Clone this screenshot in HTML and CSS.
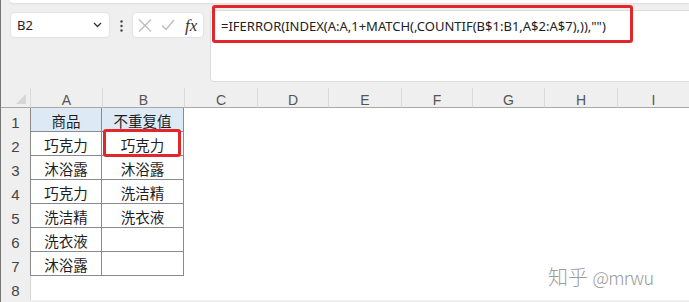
FILE: index.html
```html
<!DOCTYPE html>
<html lang="zh-CN">
<head>
  <meta charset="UTF-8" />
  <title>IFERROR 去重</title>
  <link rel="stylesheet" href="styles.css">
</head>
<body>
  <div class="app">
    <div class="ribbon-edge"></div>

    <div class="formula-row">
      <div class="namebox">
        <span>B2</span>
        <svg class="chevron" width="9" height="6" viewBox="0 0 9 6"><path d="M1 1 L4.5 4.5 L8 1" fill="none" stroke="#333" stroke-width="1.3"/></svg>
      </div>
      <div class="grip">
        <svg width="3" height="12" viewBox="0 0 3 12"><circle cx="1.5" cy="1.5" r="1.2" fill="#444"/><circle cx="1.5" cy="6" r="1.2" fill="#444"/><circle cx="1.5" cy="10.5" r="1.2" fill="#444"/></svg>
      </div>
      <div class="fx-buttons">
        <svg width="14" height="13" viewBox="0 0 14 13"><path d="M1 0.5 L13 12.5 M13 0.5 L1 12.5" stroke="#bdbdbd" stroke-width="1.4" fill="none"/></svg>
        <svg width="14" height="12" viewBox="0 0 14 12"><path d="M1 6.5 L5 10.5 L13 1" stroke="#bdbdbd" stroke-width="1.4" fill="none"/></svg>
        <span class="fx">fx</span>
      </div>
      <div class="formula">
        <span class="formula-text">=IFERROR(INDEX(A:A,1+MATCH(,COUNTIF(B$1:B1,A$2:A$7),)),"")</span>
        <span class="callout callout-formula"></span>
      </div>
    </div>

    <div class="sheet">
      <div class="corner"><span class="corner-mark"></span></div>
      <div class="col-head">A</div>
      <div class="col-head">B</div>
      <div class="col-head">C</div>
      <div class="col-head">D</div>
      <div class="col-head">E</div>
      <div class="col-head">F</div>
      <div class="col-head">G</div>
      <div class="col-head">H</div>
      <div class="col-head">I</div>

      <div class="row-head">1</div>
      <div class="cell data first title">商品</div>
      <div class="cell data title">不重复值</div>
      <div class="cell blank-span"></div>

      <div class="row-head">2</div>
      <div class="cell data first">巧克力</div>
      <div class="cell data selected">巧克力<span class="callout callout-cell"></span></div>
      <div class="cell blank-span"></div>

      <div class="row-head">3</div>
      <div class="cell data first">沐浴露</div>
      <div class="cell data">沐浴露</div>
      <div class="cell blank-span"></div>

      <div class="row-head">4</div>
      <div class="cell data first">巧克力</div>
      <div class="cell data">洗洁精</div>
      <div class="cell blank-span"></div>

      <div class="row-head">5</div>
      <div class="cell data first">洗洁精</div>
      <div class="cell data">洗衣液</div>
      <div class="cell blank-span"></div>

      <div class="row-head">6</div>
      <div class="cell data first">洗衣液</div>
      <div class="cell data"></div>
      <div class="cell blank-span"></div>

      <div class="row-head">7</div>
      <div class="cell data first">沐浴露</div>
      <div class="cell data"></div>
      <div class="cell blank-span"></div>

      <div class="row-head">8</div>
      <div class="cell empty first"></div>
      <div class="cell empty"></div>
      <div class="cell blank-span"></div>
    </div>

    <div class="watermark">知乎 <span class="handle">@mrwu</span></div>
  </div>
</body>
</html>
```

FILE: styles.css
```css
body {
  margin: 0;
  background: #efefef;
  font-family: "Noto Sans", "Noto Sans CJK SC", sans-serif;
  color: #222;
  overflow: hidden;
}

.app {
  position: relative;
  width: 689px;
  height: 302px;
  border-left: 1px solid #777;
  box-sizing: border-box;
  overflow: hidden;
}

.ribbon-edge {
  height: 3px;
  margin-left: 9px;
  background: #fff;
  border-bottom-left-radius: 4px;
  box-shadow: 0 1px 2px rgba(0,0,0,0.08);
}

/* formula bar */
.formula-row {
  display: flex;
  align-items: flex-start;
  height: 85px;
  padding-top: 9px;
  box-sizing: border-box;
}

.namebox {
  display: flex;
  align-items: center;
  justify-content: space-between;
  width: 100px;
  height: 26px;
  margin-left: 9px;
  padding: 0 6px;
  box-sizing: border-box;
  background: #fff;
  border: 1px solid #e2e2e2;
  border-radius: 4px;
  font-size: 13px;
  color: #222;
}

.chevron {
  margin-right: 1px;
}

.grip {
  display: flex;
  justify-content: center;
  width: 22px;
  padding-top: 8px;
}

.fx-buttons {
  display: flex;
  align-items: center;
  gap: 9px;
  width: 72px;
  height: 26px;
  padding-left: 5px;
  box-sizing: border-box;
  background: #fff;
  border: 1px solid #e2e2e2;
  border-radius: 4px;
}

.fx {
  font-family: "Liberation Serif", serif;
  font-style: italic;
  font-size: 17px;
  color: #333;
  margin-left: 1px;
  line-height: 1;
}

.formula {
  position: relative;
  flex: 1;
  height: 72px;
  margin-top: -2px;
  margin-left: 6px;
  margin-right: -10px;
  box-sizing: border-box;
  background: #fff;
  border: 1px solid #dcdcdc;
  border-radius: 4px;
}

.formula-text {
  display: block;
  padding: 5px 0 0 10px;
  font-size: 13px;
  line-height: 20px;
  color: #222;
  white-space: nowrap;
}

.callout {
  position: absolute;
  border: 3px solid #e3262b;
  border-radius: 3px;
  box-sizing: border-box;
}

.callout-formula {
  left: 1px;
  top: -6px;
  width: 421px;
  height: 38px;
}

/* sheet grid */
.sheet {
  display: grid;
  grid-template-columns: 29px 72px 82px 73px 71px 73px 71px 72px 73px 72px;
  grid-template-rows: 20px repeat(8, 24px);
  background: #fff;
}

.corner,
.col-head {
  background: #efefef;
  border-bottom: 1px solid #a8a8a8;
  box-sizing: border-box;
}

.corner {
  position: relative;
}

.corner-mark {
  position: absolute;
  right: 4px;
  bottom: 3px;
  width: 0;
  height: 0;
  border-left: 10px solid transparent;
  border-bottom: 10px solid #d6d6d6;
}

.col-head {
  border-left: 1px solid #dadada;
  text-align: center;
  font-family: "Liberation Sans", sans-serif;
  font-size: 14px;
  line-height: 20px;
  padding-top: 2px;
  color: #555;
}

.row-head {
  background: #efefef;
  text-align: center;
  font-family: "Liberation Sans", sans-serif;
  font-size: 15px;
  line-height: 24px;
  padding-top: 3px;
  box-sizing: border-box;
  color: #444;
}

.cell {
  position: relative;
  box-sizing: border-box;
  text-align: center;
  font-family: "Noto Sans CJK SC", sans-serif;
  font-size: 14.5px;
  line-height: 22px;
  padding-top: 2px;
  color: #1e1e1e;
}

.blank-span {
  grid-column: 4 / -1;
}

.data {
  border-right: 1px solid #8a8a8a;
  border-bottom: 1px solid #8a8a8a;
}

.data.first {
  border-left: 1px solid #8a8a8a;
}

.empty.first {
  border-left: 1px solid #d4d4d4;
}

.title {
  background: #dde9f5;
}

.callout-cell {
  left: 1px;
  top: -3px;
  width: 78px;
  height: 28px;
}

.watermark {
  position: absolute;
  left: 547px;
  top: 262px;
  font-family: "Noto Sans CJK SC", sans-serif;
  font-size: 20px;
  font-weight: 300;
  color: #9c9c9c;
}

.handle {
  font-size: 18px;
  letter-spacing: -0.6px;
}
```
